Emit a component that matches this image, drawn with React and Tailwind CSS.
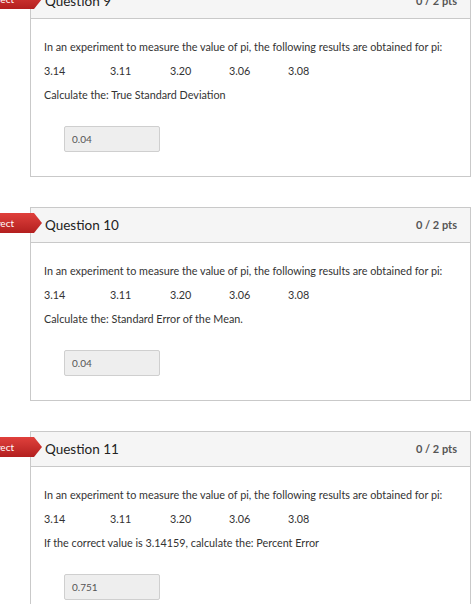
const values = ["3.14", "3.11", "3.20", "3.06", "3.08"];
const colW = ["w-[66px]", "w-[60px]", "w-[59px]", "w-[59px]", "w-[59px]"];

const questions = [
  { n: 9, ask: "Calculate the: True Standard Deviation", answer: "0.04" },
  { n: 10, ask: "Calculate the: Standard Error of the Mean.", answer: "0.04" },
  { n: 11, ask: "If the correct value is 3.14159, calculate the: Percent Error", answer: "0.751" },
];

function Banner() {
  return (
    <div className="absolute top-[5px] left-[-70px] h-[20px] w-[81px] bg-gradient-to-b from-[#e0403c] to-[#b31f1f] text-white text-[10px] leading-[20px] text-right pr-[28px] [clip-path:polygon(0_0,calc(100%-8px)_0,100%_50%,calc(100%-8px)_100%,0_100%)]">
      Incorrect
    </div>
  );
}

function Question({ n, ask, answer }) {
  return (
    <div className="relative border border-[#c9c9c9] bg-white">
      <Banner />
      <div className="h-[35px] bg-[#f5f5f5] border-b border-[#c9c9c9] flex items-center justify-between pl-[14px] pr-[13px]">
        <span className="text-[13.5px] text-[#222]">Question {n}</span>
        <span className="text-[11px] font-bold text-[#555]">0 / 2 pts</span>
      </div>
      <div className="pt-[16px] pl-[13px] pb-[24px] text-[10.8px] leading-6 text-[#333]">
        <p className="whitespace-nowrap">In an experiment to measure the value of pi, the following results are obtained for pi:</p>
        <div className="flex">
          {values.map((v, i) => (
            <span key={v} className={colW[i]}>{v}</span>
          ))}
        </div>
        <p>{ask}</p>
        <div className="mt-[19px] ml-[20px] w-[96px] h-[26px] bg-[#eeeeee] border border-[#cfcfcf] rounded-[2px] pl-[7px] flex items-center text-[10px] text-[#555]">
          {answer}
        </div>
      </div>
    </div>
  );
}

export default function App() {
  return (
    <div className="w-[474px] h-[604px] overflow-hidden bg-white font-['Lato',sans-serif]">
      <div className="mt-[-17px] pl-[30px] pr-[3px] flex flex-col gap-[30px]">
        {questions.map((q) => (
          <Question key={q.n} {...q} />
        ))}
      </div>
    </div>
  );
}
